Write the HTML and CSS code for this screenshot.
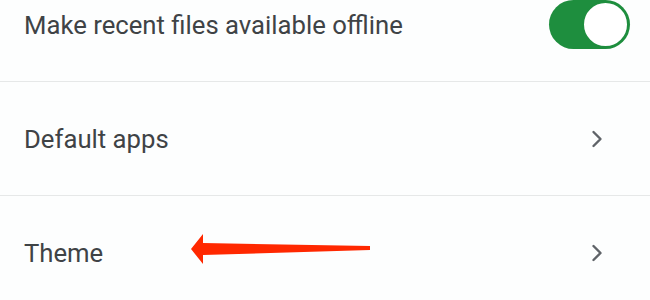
FILE: index.html
```html
<!DOCTYPE html>
<html>
<head>
<meta charset="utf-8">
<link rel="stylesheet" href="styles.css">
</head>
<body>
<div class="list">
  <div class="row">
    <span class="label">Make recent files available offline</span>
    <div class="toggle"><div class="knob"></div></div>
  </div>
  <div class="row">
    <span class="label">Default apps</span>
    <svg class="chev" width="12" height="18" viewBox="0 0 12 18"><path d="M2.5 2 L9.5 9 L2.5 16" fill="none" stroke="#5f6368" stroke-width="2.4" stroke-linecap="round" stroke-linejoin="round"/></svg>
  </div>
  <div class="row">
    <span class="label">Theme</span>
    <svg class="chev" width="12" height="18" viewBox="0 0 12 18"><path d="M2.5 2 L9.5 9 L2.5 16" fill="none" stroke="#5f6368" stroke-width="2.4" stroke-linecap="round" stroke-linejoin="round"/></svg>
  </div>
</div>
<svg class="arrow" width="650" height="300" viewBox="0 0 650 300"><polygon points="191,249 203,234 203,243 370,246 370,250 203,255 203,264" fill="#ff2800"/></svg>
</body>
</html>
```
FILE: styles.css
```css
html, body {
  margin: 0;
  padding: 0;
  background: #fdfefe;
  overflow: hidden;
}
body {
  width: 650px;
  height: 300px;
  position: relative;
  font-family: Roboto, "Noto Sans", sans-serif;
}
.list {
  margin-top: -32px;
}
.row {
  height: 113px;
  border-bottom: 1px solid #e6e8e8;
  display: flex;
  align-items: center;
  justify-content: space-between;
  padding-left: 24px;
  padding-right: 20px;
}
.label {
  font-size: 25.7px;
  color: #3f4346;
}
.toggle {
  width: 81px;
  height: 49px;
  border-radius: 25px;
  background: #1e8e3e;
  display: flex;
  justify-content: flex-end;
  align-items: center;
  box-sizing: border-box;
  padding: 1px;
  margin-top: -1px;
}
.knob {
  width: 43px;
  height: 43px;
  border-radius: 50%;
  background: #fff;
  border: 2px solid #1e8e3e;
}
.chev {
  margin-right: 27px;
}
.arrow {
  position: absolute;
  left: 0;
  top: 0;
}
```
